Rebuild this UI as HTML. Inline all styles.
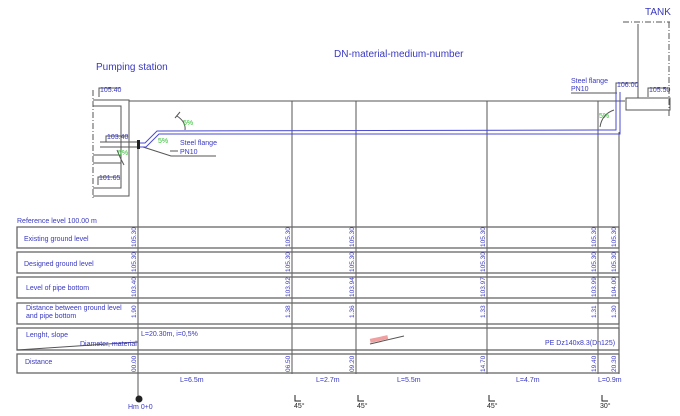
<!DOCTYPE html>
<html><head><meta charset="utf-8"><style>
html,body{margin:0;padding:0;background:#fff;width:680px;height:416px;overflow:hidden}
svg{display:block}
text{font-family:"Liberation Sans",sans-serif;fill:#3838c0}
</style></head><body>
<svg width="680" height="416" viewBox="0 0 680 416">
<g stroke="#555" stroke-width="1" fill="none">
<line x1="93" y1="90" x2="93" y2="200" stroke-dasharray="6,2,1,2"/>
<polyline points="93,100 129,100 129,196 93,196"/>
<polyline points="93,106 121,106 121,188 93,188"/>
<line x1="93" y1="155" x2="121" y2="155"/>
<line x1="93" y1="163" x2="121" y2="163"/>
<line x1="100" y1="142" x2="138" y2="142"/>
<line x1="100" y1="147" x2="138" y2="147"/>
<line x1="129" y1="101" x2="625" y2="101"/>
<polyline points="99,97 99,88 120,88"/>
<polyline points="106,142 106,136 128,136"/>
<polyline points="98,185 98,177 120,177"/>
<polyline points="143,147 171,156 216,156"/>
<path d="M175,118 L180,112 M177,116 Q186,122 185,130" />
<line x1="178" y1="151" x2="170" y2="151"/>
<path d="M124,165 Q120,158 117,150" />
<line x1="138" y1="146" x2="138" y2="398"/>
<line x1="292" y1="101" x2="292" y2="374"/>
<line x1="356" y1="101" x2="356" y2="374"/>
<line x1="487" y1="101" x2="487" y2="374"/>
<line x1="598" y1="101" x2="598" y2="374"/>
<line x1="619" y1="132" x2="619" y2="374"/>
<line x1="623" y1="22" x2="670" y2="22" stroke-dasharray="6,2,1,2"/>
<line x1="669" y1="22" x2="669" y2="118" stroke-dasharray="6,2,1,2"/>
<line x1="638" y1="24" x2="638" y2="98"/>
<rect x="626" y="98" width="44" height="12"/>
<polyline points="571,93 617,93"/>
<polyline points="616,93 616,83 637,83"/>
<polyline points="648,97 648,88 668,88"/>
<path d="M600,127 Q602,114 614,110"/>
</g>
<g stroke="#4a4ad0" stroke-width="1" fill="none">
<polyline points="138,143 145,143 157,131 598,130 616,130 616,92"/>
<polyline points="138,147 146,147 159,134 598,134 620,134 620,92"/>
</g>
<rect x="137" y="140" width="3" height="9" fill="#222"/>
<g font-size="7">
<text x="183" y="125" style="fill:#30c030">5%</text>
<text x="158" y="143" style="fill:#30c030">5%</text>
<text x="118" y="155" style="fill:#30c030">5%</text>
<text x="599" y="118" style="fill:#30c030">5%</text>
</g>
<text x="334" y="57" font-size="10">DN-material-medium-number</text>
<text x="96" y="70" font-size="10">Pumping station</text>
<text x="645" y="15" font-size="10">TANK</text>
<text x="100" y="92" font-size="7">105.40</text>
<text x="107" y="139" font-size="7">103.40</text>
<text x="99" y="180" font-size="7">101.65</text>
<text x="180" y="145" font-size="7">Steel flange</text>
<text x="180" y="154" font-size="7">PN10</text>
<text x="571" y="83" font-size="7">Steel flange</text>
<text x="571" y="91" font-size="7">PN10</text>
<text x="617" y="87" font-size="7">106.00</text>
<text x="649" y="92" font-size="7">105.50</text>
<text x="17" y="223" font-size="7">Reference level 100.00 m</text>
<g stroke="#666" fill="none" stroke-width="1.3">
<rect x="17" y="227" width="602" height="21"/>
<rect x="17" y="252" width="602" height="21"/>
<rect x="17" y="277" width="602" height="21"/>
<rect x="17" y="303" width="602" height="21"/>
<rect x="17" y="328" width="602" height="22"/>
<rect x="17" y="354" width="602" height="19"/>
</g>
<g stroke="#555" fill="none">
<line x1="17" y1="350" x2="138" y2="342"/>
<line x1="370" y1="344" x2="404" y2="336"/>
</g>
<rect x="370" y="337" width="18" height="4" fill="#f0a0a0" transform="rotate(-12 379 339)"/>
<g font-size="7">
<text x="24" y="241">Existing ground level</text>
<text x="24" y="266">Designed ground level</text>
<text x="26" y="290">Level of pipe bottom</text>
<text x="26" y="310">Distance between ground level</text>
<text x="26" y="318">and pipe bottom</text>
<text x="26" y="337">Lenght, slope</text>
<text x="80" y="346">Diameter, material</text>
<text x="141" y="336">L=20.30m, i=0,5%</text>
<text x="545" y="345">PE Dz140x8.3(Dn125)</text>
<text x="25" y="364">Distance</text>
<text x="180" y="382">L=6.5m</text>
<text x="316" y="382">L=2.7m</text>
<text x="397" y="382">L=5.5m</text>
<text x="516" y="382">L=4.7m</text>
<text x="598" y="382">L=0.9m</text>
<text x="128" y="409">Hm 0+0</text>
</g>
<g font-size="7">
<text x="294" y="408" style="fill:#222">45°</text>
<text x="357" y="408" style="fill:#222">45°</text>
<text x="487" y="408" style="fill:#222">45°</text>
<text x="600" y="408" style="fill:#222">30°</text>
</g>
<g stroke="#222" fill="none">
<polyline points="295,395 295,401 301,401"/><polyline points="358,395 358,401 364,401"/>
<polyline points="489,395 489,401 495,401"/><polyline points="602,395 602,401 608,401"/>
</g>
<circle cx="139" cy="399" r="3.5" fill="#222"/>
<g font-size="6.5">
<text transform="translate(136,247) rotate(-90)">105.30</text>
<text transform="translate(136,272) rotate(-90)">105.30</text>
<text transform="translate(136,297) rotate(-90)">103.40</text>
<text transform="translate(136,318) rotate(-90)">1.90</text>
<text transform="translate(136,372) rotate(-90)">00.00</text>
<text transform="translate(290,247) rotate(-90)">105.30</text>
<text transform="translate(290,272) rotate(-90)">105.30</text>
<text transform="translate(290,297) rotate(-90)">103.92</text>
<text transform="translate(290,318) rotate(-90)">1.38</text>
<text transform="translate(290,372) rotate(-90)">06.50</text>
<text transform="translate(354,247) rotate(-90)">105.30</text>
<text transform="translate(354,272) rotate(-90)">105.30</text>
<text transform="translate(354,297) rotate(-90)">103.94</text>
<text transform="translate(354,318) rotate(-90)">1.36</text>
<text transform="translate(354,372) rotate(-90)">09.20</text>
<text transform="translate(485,247) rotate(-90)">105.30</text>
<text transform="translate(485,272) rotate(-90)">105.30</text>
<text transform="translate(485,297) rotate(-90)">103.97</text>
<text transform="translate(485,318) rotate(-90)">1.33</text>
<text transform="translate(485,372) rotate(-90)">14.70</text>
<text transform="translate(596,247) rotate(-90)">105.30</text>
<text transform="translate(596,272) rotate(-90)">105.30</text>
<text transform="translate(596,297) rotate(-90)">103.99</text>
<text transform="translate(596,318) rotate(-90)">1.31</text>
<text transform="translate(596,372) rotate(-90)">19.40</text>
<text transform="translate(616,247) rotate(-90)">105.30</text>
<text transform="translate(616,272) rotate(-90)">105.30</text>
<text transform="translate(616,297) rotate(-90)">104.00</text>
<text transform="translate(616,318) rotate(-90)">1.30</text>
<text transform="translate(616,372) rotate(-90)">20.30</text>
</g>
</svg>
</body></html>
